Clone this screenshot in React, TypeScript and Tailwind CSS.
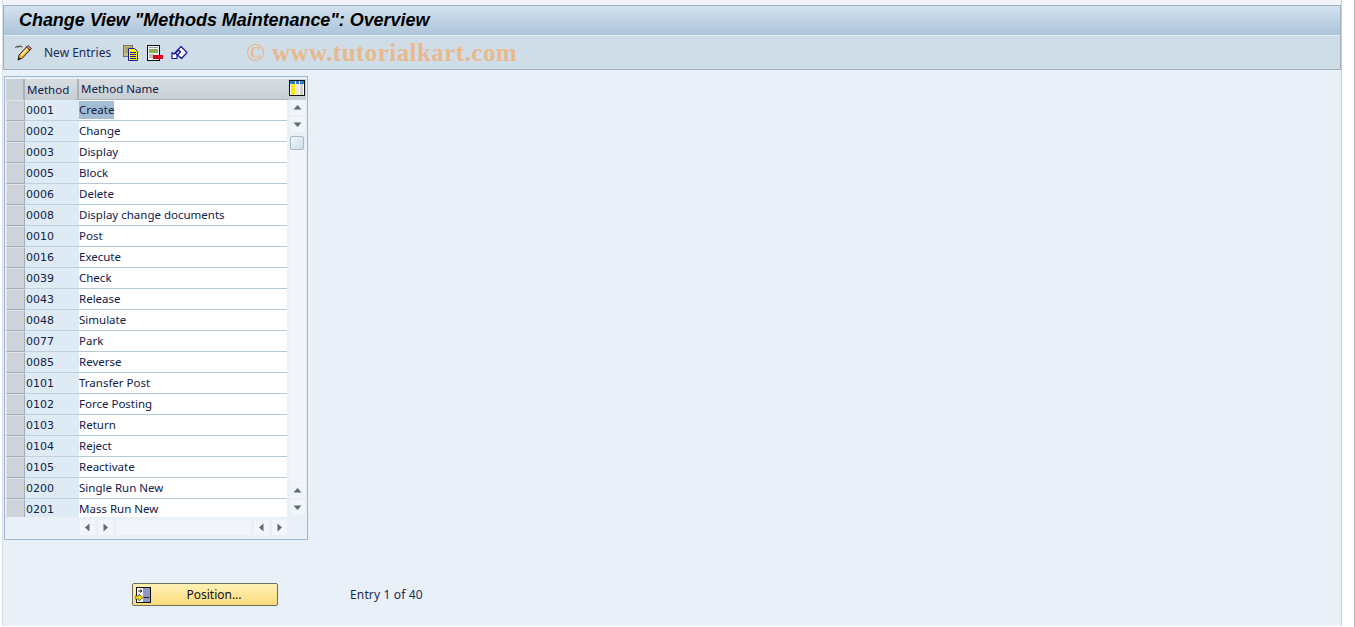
import React from 'react';

const ROWS: [string, string][] = [
  ['0001', 'Create'],
  ['0002', 'Change'],
  ['0003', 'Display'],
  ['0005', 'Block'],
  ['0006', 'Delete'],
  ['0008', 'Display change documents'],
  ['0010', 'Post'],
  ['0016', 'Execute'],
  ['0039', 'Check'],
  ['0043', 'Release'],
  ['0048', 'Simulate'],
  ['0077', 'Park'],
  ['0085', 'Reverse'],
  ['0101', 'Transfer Post'],
  ['0102', 'Force Posting'],
  ['0103', 'Return'],
  ['0104', 'Reject'],
  ['0105', 'Reactivate'],
  ['0200', 'Single Run New'],
  ['0201', 'Mass Run New'],
];

const PenIcon = () => (
  <svg width="17" height="17" viewBox="0 0 17 17" className="shrink-0">
    <path d="M0.5 4 C1.5 1.5 2.5 1.5 3 3.5 C3.5 1.5 4.5 1 5 3 C5.5 1.5 6.5 1.5 7 3.5" fill="none" stroke="#333" strokeWidth="1" />
    <path d="M4 11 L11.5 3 L15 6 L7.5 14 L3 16 Z" fill="#f7b733" stroke="#222" strokeWidth="1" />
    <path d="M11.5 3 L13 1.5 L16.5 4.5 L15 6 Z" fill="#ef8f9a" stroke="#222" strokeWidth="0.9" />
    <path d="M6 11.5 L12.5 4.5" stroke="#fff3b0" strokeWidth="1.2" />
    <path d="M3 16 L3.8 13 L5.8 15 Z" fill="#222" />
  </svg>
);

const CopyIcon = () => (
  <svg width="16" height="16" viewBox="0 0 16 16" className="shrink-0">
    <rect x="0.5" y="0.5" width="9" height="11" fill="#c9bd7d" stroke="#77705a" />
    <path d="M2 3 H8 M2 5 H8 M2 7 H8" stroke="#8b8468" />
    <path d="M5.5 3.5 H11.5 L14.5 6.5 V15.5 H5.5 Z" fill="#fff200" stroke="#1a1a9c" />
    <path d="M7 7.5 H13 M7 9.5 H13 M7 11.5 H13 M7 13.5 H13" stroke="#1a1a9c" />
  </svg>
);

const DeleteIcon = () => (
  <svg width="17" height="16" viewBox="0 0 17 16" className="shrink-0">
    <rect x="0.5" y="0.5" width="12" height="15" fill="#f4f4f4" stroke="#111" />
    <path d="M2 2.5 H11" stroke="#9a9a9a" />
    <rect x="2" y="4" width="9" height="4" fill="#8fae5a" />
    <path d="M2 10 H7 M2 12 H7" stroke="#888" />
    <rect x="6" y="10" width="10" height="4" fill="#e3001b" />
  </svg>
);

const UndoIcon = () => (
  <svg width="17" height="16" viewBox="0 0 17 16" className="shrink-0">
    <path d="M10 1.5 L16 7.5 L10.5 13.5 L6.5 10 L9.5 7 L7.5 5 L4.5 8 L6 10 V13.5 H1 V7.5 L3 9 Z" fill="#fff" stroke="#14149a" strokeWidth="1.2" strokeLinejoin="round" />
  </svg>
);

const ColumnsIcon = () => (
  <svg width="16" height="16" viewBox="0 0 16 16" className="shrink-0">
    <rect x="0.5" y="0.5" width="15" height="15" fill="#fff" stroke="#111" />
    <rect x="1" y="1" width="14" height="3" fill="#2f7fc4" />
    <path d="M6.5 1 V15 M10.5 1 V15" stroke="#fff" />
    <rect x="2" y="4" width="4" height="11" fill="#ffe500" />
    <rect x="7" y="4" width="3" height="11" fill="#e8e8e8" />
    <rect x="11" y="4" width="3" height="11" fill="#cfcfcf" />
  </svg>
);

const PositionIcon = () => (
  <svg width="16" height="16" viewBox="0 0 16 16" className="shrink-0">
    <rect x="1.5" y="0.5" width="14" height="15" fill="#8f96c4" stroke="#111" />
    <rect x="2" y="1" width="6" height="14" fill="#fff" />
    <path d="M3 4 H7 M5 2.5 L7 4 L5 5.5 M9 10.5 H14" fill="none" stroke="#222" />
    <path d="M0 9 H4 V7 L8 10.5 L4 14 V12 H0 Z" fill="#ffe600" stroke="#333" strokeWidth="0.7" />
  </svg>
);

const ScrollBtn = ({ dir }: { dir: 'up' | 'down' | 'left' | 'right' }) => {
  const d = {
    up: 'M3.5 9.5 L7.5 5 L11.5 9.5 Z',
    down: 'M3.5 5.5 L7.5 10 L11.5 5.5 Z',
    left: 'M9.5 3.5 L5 7.5 L9.5 11.5 Z',
    right: 'M5.5 3.5 L10 7.5 L5.5 11.5 Z',
  }[dir];
  return (
    <div className="w-[15px] h-[15px] bg-[#f2f6fa] shrink-0">
      <svg width="15" height="15" viewBox="0 0 15 15">
        <path d={d} fill="#5c6b78" />
      </svg>
    </div>
  );
};

export default function App() {
  return (
    <div
      className="w-[1355px] h-[627px] overflow-hidden bg-white flex text-[11.5px] text-[#10204a]"
      style={{ fontFamily: '"Noto Sans", Tahoma, sans-serif' }}
    >
      {/* main window */}
      <div className="ml-[2px] w-[1340px] h-[626px] flex flex-col bg-[#e9f0f7] border-r border-r-[#c5d0dc] border-l border-l-[#d5dee9]">
        <div className="h-[5px] bg-[#f1f3f9] shrink-0" />
        <div className="border border-[#9fb0c0] w-[1338px] shrink-0">
          <div className="h-[30px] flex items-center pl-[15px] bg-gradient-to-b from-[#d2e1ee] to-[#aec5da] border-b border-b-[#e6eef5]">
            <h1
              className="text-[18px] font-bold italic text-black whitespace-nowrap tracking-[-0.05px]"
              style={{ fontFamily: '"Liberation Sans", Arial, sans-serif' }}
            >
              Change View "Methods Maintenance": Overview
            </h1>
          </div>
          <div className="h-[33px] flex items-center pl-[11px] bg-[#cfdde8]">
            <PenIcon />
            <span className="ml-[12px] text-[12px] text-[#1c2a55] whitespace-nowrap">New Entries</span>
            <div className="ml-[12px]"><CopyIcon /></div>
            <div className="ml-[8px]"><DeleteIcon /></div>
            <div className="ml-[7px]"><UndoIcon /></div>
            <span
              className="ml-[58px] text-[25px] font-bold text-[#e8b98c] whitespace-nowrap tracking-[0.45px]"
              style={{ fontFamily: '"Liberation Serif", "Times New Roman", serif' }}
            >
              © www.tutorialkart.com
            </span>
          </div>
        </div>

        {/* table control */}
        <div className="mt-[6px] ml-[1px] w-[304px] h-[464px] border border-[#9db9d2] pt-[2px] pl-[1px] shrink-0">
          <div className="flex h-[21px]">
            <div className="w-[19px] bg-[#c9d0d6] border-r-2 border-r-[#a9b3bc]" />
            <div className="w-[54px] flex items-center pl-[2px] bg-gradient-to-b from-[#d8dde1] to-[#c7ced4] border-r-2 border-r-[#a9b3bc]">
              Method
            </div>
            <div className="w-[209px] flex items-center pl-[2px] bg-gradient-to-b from-[#d8dde1] to-[#c7ced4] border-b border-b-[#a9b3bc]">
              Method Name
            </div>
            <div className="w-[18px] flex items-start pt-[1px] justify-center bg-[#c9d0d6]">
              <ColumnsIcon />
            </div>
          </div>
          <div className="flex">
            <div className="w-[281px] h-[417px] overflow-hidden">
              {ROWS.map(([code, name], i) => (
                <div key={code} className="flex h-[21px]">
                  <div className="w-[19px] bg-[#cdd3d9] border border-[#a3adb7] border-l-[#e1e5e9] border-t-[#e1e5e9]" />
                  <div
                    className="w-[54px] flex items-center pl-[1px] pt-[3px] bg-[#deebf5] border-b border-b-[#c3d1dd]"
                    style={{ fontFamily: '"DejaVu Sans", sans-serif', fontSize: '11px' }}
                  >
                    {code}
                  </div>
                  <div className="w-[208px] flex items-center bg-white border-b border-b-[#b9c8d6]">
                    <span className={i === 0 ? 'bg-[#a5bdd4] text-[#10204a]' : ''}>{name}</span>
                  </div>
                </div>
              ))}
            </div>
            <div className="w-[19px] h-[417px] pl-[3px] pb-[2px] flex flex-col">
              <ScrollBtn dir="up" />
              <div className="mt-[2px]"><ScrollBtn dir="down" /></div>
              <div className="mt-[4px] w-[14px] h-[14px] rounded-[2px] bg-gradient-to-br from-[#f2f6fa] to-[#cddbe7] border border-[#aab6c1]" />
              <div className="w-[15px] flex-1 bg-[#f2f6fa]" />
              <div className="mt-[1px]"><ScrollBtn dir="up" /></div>
              <div className="mt-[2px]"><ScrollBtn dir="down" /></div>
            </div>
          </div>
          <div className="flex mt-[3px] pl-[74px] gap-[3px]">
            <ScrollBtn dir="left" />
            <ScrollBtn dir="right" />
            <div className="w-[135px] h-[15px] bg-[#f2f6fa]" />
            <ScrollBtn dir="left" />
            <ScrollBtn dir="right" />
          </div>
        </div>

        {/* footer line */}
        <div className="mt-[43px] ml-[129px] flex items-center">
          <button className="w-[146px] h-[23px] flex items-center pl-[2px] rounded-[2px] border border-[#6f6f5f] bg-gradient-to-b from-[#fff0b4] to-[#fbdc7c] text-[12px] text-[#111]">
            <PositionIcon />
            <span className="flex-1 text-center">Position...</span>
          </button>
          <span className="ml-[72px] text-[12px] tracking-[0.15px] text-[#1c2a55]">Entry 1 of 40</span>
        </div>
      </div>
      <div className="flex-1" />
      <div className="w-px h-[627px] bg-[#b9b9b9]" />
    </div>
  );
}
